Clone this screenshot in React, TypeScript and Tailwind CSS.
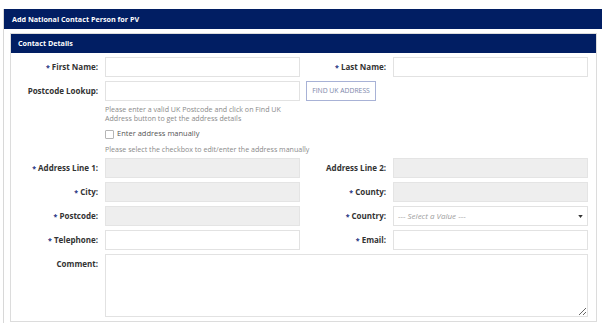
export default function App() {
  const font = { fontFamily: '"Open Sans", "Liberation Sans", sans-serif' };

  const Label = ({ text, req, w }: { text: string; req?: boolean; w: string }) => (
    <div className={w + " shrink-0 pr-[7px] text-right text-[8px] font-bold text-[#333] leading-[20px]"}>
      {req && <span className="text-[#1a2f80] mr-[2px] text-[7px] relative -top-[0.5px]">*</span>}
      {text}:
    </div>
  );

  const Field = ({ disabled }: { disabled?: boolean }) => (
    <div
      className={
        "w-[195px] h-[20px] shrink-0 border " +
        (disabled ? "bg-[#eeeeee] border-[#e4e4e4]" : "bg-white border-[#e2e2e2]")
      }
    />
  );

  const Row = ({ children }: { children: React.ReactNode }) => (
    <div className="flex h-[20px] items-start">{children}</div>
  );

  return (
    <div className="w-[602px] h-[323px] overflow-hidden bg-white" style={font}>
      <div className="ml-[3px] mt-[9px] w-[640px] border-l border-[#d8d8d8] h-[320px]">
        {/* outer header */}
        <div className="h-[20px] bg-[#011e63] text-white text-[7.2px] font-bold pl-[8px] flex items-center">
          Add National Contact Person for PV
        </div>

        {/* inner panel */}
        <div className="ml-[6px] mt-[4px] w-[587px] border border-[#dcdcdc] h-[289px]">
          <div className="h-[19px] bg-[#011e63] text-white text-[7.2px] font-bold pl-[7px] flex items-center">
            Contact Details
          </div>

          <div className="pt-[4px] flex flex-col gap-[4px]">
            <Row>
              <Label text="First Name" req w="w-[94px]" />
              <Field />
              <Label text="Last Name" req w="w-[93px]" />
              <Field />
            </Row>

            <Row>
              <Label text="Postcode Lookup" w="w-[94px]" />
              <Field />
              <button className="ml-[6px] h-[20px] w-[70px] border border-[#a8b2d6] bg-white text-[6.8px] text-[#7d88ab]">
                FIND UK ADDRESS
              </button>
            </Row>

            <div className="pl-[94px] text-[7.1px] text-[#8a8a8a]">
              <div className="w-[195px] leading-[9px]">
                Please enter a valid UK Postcode and click on Find UK Address button to get the address details
              </div>
              <div className="flex items-center gap-[3px] mt-[6px] h-[10px]">
                <span className="w-[9px] h-[9px] border border-[#b5b5b5] bg-white rounded-[1px]" />
                <span className="text-[7.5px] text-[#555]">Enter address manually</span>
              </div>
              <div className="mt-[5px] leading-[10px]">
                Please select the checkbox to edit/enter the address manually
              </div>
            </div>

            <Row>
              <Label text="Address Line 1" req w="w-[94px]" />
              <Field disabled />
              <Label text="Address Line 2" w="w-[93px]" />
              <Field disabled />
            </Row>

            <Row>
              <Label text="City" req w="w-[94px]" />
              <Field disabled />
              <Label text="County" req w="w-[93px]" />
              <Field disabled />
            </Row>

            <Row>
              <Label text="Postcode" req w="w-[94px]" />
              <Field disabled />
              <Label text="Country" req w="w-[93px]" />
              <div className="w-[195px] h-[20px] shrink-0 border border-[#e2e2e2] bg-white flex items-center justify-between pl-[4px] pr-[4px]">
                <span className="text-[8px] italic text-[#a0a0a0]">--- Select a Value ---</span>
                <svg width="5" height="3" viewBox="0 0 6 4">
                  <path d="M0 0 L6 0 L3 4 Z" fill="#333" />
                </svg>
              </div>
            </Row>

            <Row>
              <Label text="Telephone" req w="w-[94px]" />
              <Field />
              <Label text="Email" req w="w-[93px]" />
              <Field />
            </Row>

            <div className="flex items-start">
              <Label text="Comment" w="w-[94px]" />
              <textarea className="w-[483px] h-[63px] border border-[#e2e2e2] bg-white outline-none" />
            </div>
          </div>
        </div>
      </div>
    </div>
  );
}
